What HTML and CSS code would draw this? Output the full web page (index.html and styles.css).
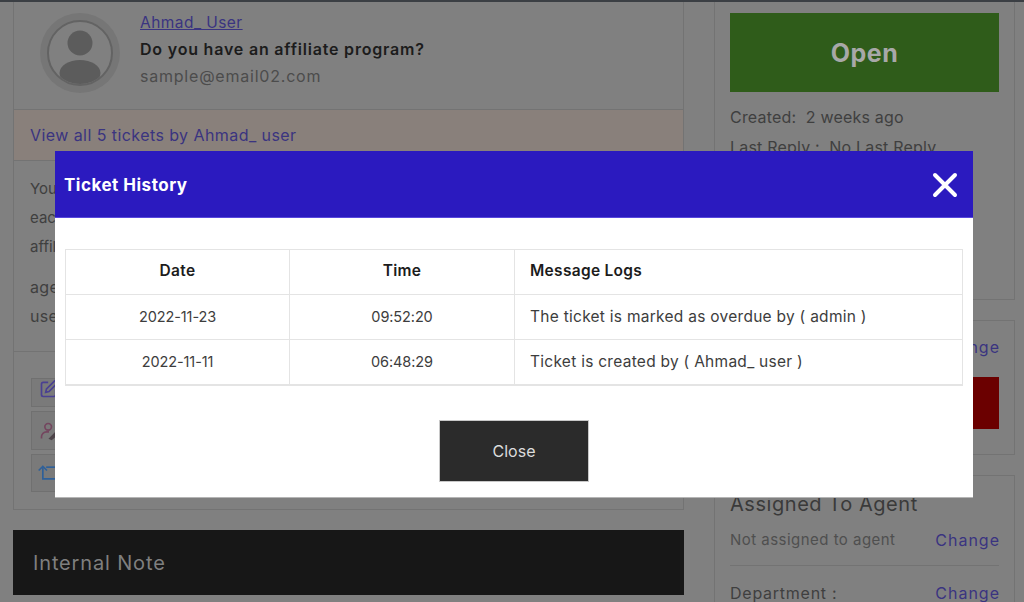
FILE: index.html
```html
<!DOCTYPE html>
<html lang="en">
<head>
<meta charset="utf-8">
<title>Ticket History</title>
<link rel="stylesheet" href="styles.css">
</head>
<body>
<div class="topline"></div>
<div class="page">
  <main class="main">
    <section class="ticket">
      <div class="head">
        <svg class="avatar" viewBox="0 0 80 80" aria-hidden="true">
          <defs><clipPath id="ring"><circle cx="40" cy="40" r="31"/></clipPath></defs>
          <circle cx="40" cy="40" r="40" fill="#767676"/>
          <circle cx="40" cy="40" r="32" fill="#808080" stroke="#636363" stroke-width="2"/>
          <circle cx="40" cy="30" r="12.5" fill="#5c5c5c"/>
          <ellipse cx="40" cy="60" rx="20.5" ry="13" fill="#5c5c5c" clip-path="url(#ring)"/>
        </svg>
        <div class="who">
          <a class="name">Ahmad_ User</a>
          <strong class="subject">Do you have an affiliate program?</strong>
          <span class="email">sample@email02.com</span>
        </div>
      </div>
      <div class="viewall"><a>View all 5 tickets by Ahmad_ user</a></div>
      <div class="body">
        <p>You<br>each<br>affiliate</p>
        <p class="larger">agent<br>user</p>
      </div>
      <div class="actions">
        <div class="action edit">
          <svg viewBox="0 0 24 24" fill="none" stroke="#4a4092" stroke-width="2"><path d="M11 4H5a2 2 0 0 0-2 2v13a2 2 0 0 0 2 2h13a2 2 0 0 0 2-2v-6"/><path d="M18.5 2.5a2.1 2.1 0 0 1 3 3L12 15l-4 1 1-4z"/></svg>
        </div>
        <div class="action user">
          <svg viewBox="0 0 24 24" fill="none" stroke="#74465f" stroke-width="2"><circle cx="11" cy="7" r="4"/><path d="M3 21v-2a6 6 0 0 1 6-6h3"/><path d="M13 21l6-6 2 2-6 5z" fill="#4d4449" stroke="#4d4449"/></svg>
        </div>
        <div class="action move">
          <svg viewBox="0 0 24 24" fill="none" stroke="#2f6099" stroke-width="2"><path d="M2 9l5-5 5 5"/><path d="M7 5v14h15"/><path d="M11 5h11"/></svg>
        </div>
      </div>
    </section>
    <section class="note">Internal Note</section>
  </main>
  <aside class="side">
    <section class="card status">
      <div class="open">Open</div>
      <p class="meta">Created:&nbsp; 2 weeks ago</p>
      <p class="meta">Last Reply :&nbsp; No Last Reply</p>
    </section>
    <section class="card priority">
      <div class="row"><span class="label">Priority</span><a class="change">Change</a></div>
      <div class="red"></div>
    </section>
    <section class="card agent">
      <h2>Assigned To Agent</h2>
      <div class="row rule"><span class="muted">Not assigned to agent</span><a class="change">Change</a></div>
      <div class="row"><span class="label">Department :</span><a class="change">Change</a></div>
    </section>
  </aside>
</div>

<div class="modal" role="dialog" aria-label="Ticket History">
  <header class="modal-head">
    <h1>Ticket History</h1>
    <svg class="x" viewBox="0 0 26 26" fill="none" stroke="#fff" stroke-width="4" stroke-linecap="round"><path d="M3 3l20 20M23 3L3 23"/></svg>
  </header>
  <div class="modal-body">
    <table>
      <thead>
        <tr><th class="c">Date</th><th class="c">Time</th><th>Message Logs</th></tr>
      </thead>
      <tbody>
        <tr><td class="c num">2022-11-23</td><td class="c num">09:52:20</td><td>The ticket is marked as overdue by ( admin )</td></tr>
        <tr><td class="c num">2022-11-11</td><td class="c num">06:48:29</td><td>Ticket is created by ( Ahmad_ user )</td></tr>
      </tbody>
    </table>
  </div>
  <div class="modal-foot"><button class="close" type="button">Close</button></div>
</div>
</body>
</html>
```
FILE: styles.css
```css
* { box-sizing: border-box; }
html, body { margin: 0; height: 602px; overflow: hidden; }
body {
  position: relative;
  background: #808080;
  color: #3f3f3f;
  font-family: Inter, "Open Sans", "Liberation Sans", sans-serif;
  font-size: 16px;
}
p, h1, h2 { margin: 0; }
.topline { height: 2px; background: #3b3f44; }
.page { display: flex; gap: 30px; padding: 0 9px 0 13px; height: 600px; overflow: hidden; }
.main { width: 671px; flex: none; }
.side { width: 301px; flex: none; display: flex; flex-direction: column; gap: 20px; }

.ticket { border: 1px solid #737373; border-top: 0; height: 508px; display: flex; flex-direction: column; }
.head { height: 108px; display: flex; gap: 20px; padding: 11px 26px; border-bottom: 1px solid #737373; flex: none; }
.avatar { width: 80px; height: 80px; flex: none; }
.who { display: flex; flex-direction: column; gap: 8px; }
.name { color: #3a3480; text-decoration: underline; font-size: 15.5px; line-height: 19px; letter-spacing: .45px; }
.subject { color: #1c1c1c; font-weight: 600; line-height: 19px; letter-spacing: .8px; }
.email { color: #4c4c4c; line-height: 19px; letter-spacing: .78px; }
.viewall { height: 51px; background: #89807b; display: flex; align-items: center; padding: 0 16px; border-bottom: 1px solid #737373; color: #3a3480; letter-spacing: .43px; flex: none; }
.body { height: 191px; padding: 13px 16px; border-bottom: 1px solid #737373; font-size: 15px; line-height: 29px; flex: none; }
.body p + p { margin-top: 12px; }
.larger { font-size: 16px; letter-spacing: .3px; }
.actions { padding: 26px 17px 0; display: flex; flex-direction: column; gap: 4px; }
.action { width: 44px; background: #7a7a7a; border: 1px solid #707070; display: flex; align-items: center; padding-left: 7px; }
.edit { height: 29px; padding-bottom: 7px; }
.user { height: 39px; }
.move { height: 38px; padding-left: 5px; }
.action svg { width: 20px; height: 20px; }

.note { margin-top: 20px; height: 65px; background: #171717; color: #7f7f7f; font-size: 20px; letter-spacing: .85px; display: flex; align-items: center; padding: 0 20px; }

.card { border: 1px solid #737373; padding: 0 15px; }
.status { height: 298px; flex: none; border-top: 0; padding-top: 11px; }
.open { height: 79px; background: #2f5c1a; color: #a8a8a8; font-size: 25px; font-weight: 700; letter-spacing: .5px; display: flex; align-items: center; justify-content: center; margin-bottom: 10px; }
.meta { line-height: 30px; letter-spacing: .2px; }
.priority { height: 135px; flex: none; padding-top: 16px; }
.row { display: flex; justify-content: space-between; align-items: center; line-height: 20px; }
.label { letter-spacing: .75px; }
.change { color: #3a3480; letter-spacing: 1px; margin-right: -1px; }
.red { height: 52px; margin-top: 20px; background: #6b0000; }
.agent { flex: 1; min-height: 0; padding-top: 15px; border-bottom: 0; }
.agent h2 { font-size: 20px; font-weight: 400; line-height: 26px; letter-spacing: .55px; margin-bottom: 13px; color: #3a3a3a; }
.rule { padding-bottom: 15px; border-bottom: 1px solid #737373; margin-bottom: 17px; }
.muted { color: #4f4f4f; font-size: 15px; letter-spacing: .47px; }

.modal { position: absolute; left: 55px; top: 151px; width: 918px; height: 346px; background: #fff; box-shadow: 0 1px 0 #b5b5b5; display: flex; flex-direction: column; }
.modal-head { height: 67px; background: #2b1abf; border-bottom: 1px solid #5848dd; display: flex; align-items: center; justify-content: space-between; padding: 2px 15px 0 9px; flex: none; }
.modal-head h1 { color: #fff; font-size: 17px; font-weight: 700; letter-spacing: .5px; }
.x { width: 26px; height: 26px; }
.modal-body { padding: 31px 10px 0; }
table { width: 898px; table-layout: fixed; border-collapse: collapse; color: #3d3d3d; font-size: 15.5px; border: 1px solid #e4e4e4; border-bottom-width: 2px; }
th, td { height: 45px; padding: 0 15px 2px; border: 1px solid #e4e4e4; text-align: left; letter-spacing: .27px; }
th { color: #1c1c1c; font-weight: 600; letter-spacing: .3px; padding-bottom: 4px; }
th:nth-child(1) { width: 224px; }
th:nth-child(2) { width: 225px; }
tbody tr:last-child td { padding-bottom: 0; }
.c { text-align: center; }
.num { font-size: 14.5px; letter-spacing: -.1px; }
.modal-foot { display: flex; justify-content: center; padding-top: 34px; }
.close { width: 150px; height: 62px; background: #2b2b2b; color: #dcdcdc; border: 1px solid #c8c8c8; font: inherit; font-size: 16px; }
```
